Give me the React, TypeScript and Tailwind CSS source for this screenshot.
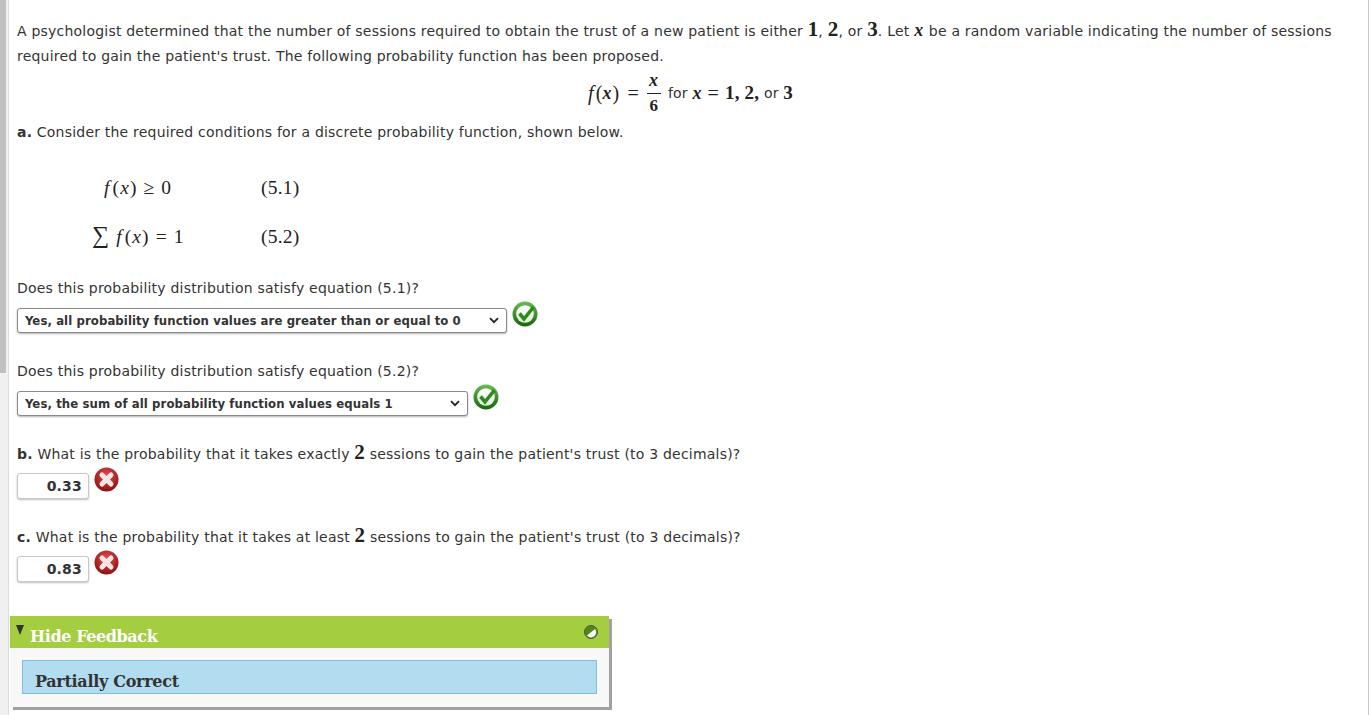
import React from "react";

const M = ({ children, className = "" }: { children: React.ReactNode; className?: string }) => (
  <span className={`font-['Liberation_Serif',serif] text-[#222] ${className}`}>{children}</span>
);
const X = () => <M className="italic font-bold text-[18px] tracking-[1px]">x</M>;
const Num = ({ n }: { n: string }) => <M className="font-bold text-[21px] leading-[1]">{n}</M>;

const Check = ({ className = "" }: { className?: string }) => (
  <svg width="26" height="26" viewBox="0 0 26 26" className={className}>
    <defs>
      <linearGradient id="ck" x1="0" y1="0" x2="0" y2="1">
        <stop offset="0" stopColor="#6dbb55" />
        <stop offset="1" stopColor="#176508" />
      </linearGradient>
      <linearGradient id="ci" x1="0" y1="0" x2="0" y2="1">
        <stop offset="0" stopColor="#ffffff" />
        <stop offset="1" stopColor="#dfeedd" />
      </linearGradient>
    </defs>
    <circle cx="13" cy="13" r="12.5" fill="url(#ck)" />
    <circle cx="13" cy="13" r="8.8" fill="url(#ci)" />
    <path d="M7.5 12.5 L12 18 L21.5 6" fill="none" stroke="#2f8a1c" strokeWidth="3.6" />
  </svg>
);

const Cross = () => (
  <svg width="25" height="25" viewBox="0 0 25 25">
    <defs>
      <radialGradient id="cr" cx="0.5" cy="0.35" r="0.65">
        <stop offset="0" stopColor="#e65050" />
        <stop offset="1" stopColor="#8c0f0f" />
      </radialGradient>
    </defs>
    <circle cx="12.5" cy="12.5" r="12" fill="url(#cr)" />
    <path d="M8 8 L17 17 M17 8 L8 17" stroke="#f3e6e6" strokeWidth="5" strokeLinecap="round" />
  </svg>
);

const Select = ({ text, width }: { text: string; width: string }) => (
  <div className={`${width} h-[25px] flex items-center justify-between bg-white border border-[#8a8a8a] rounded-[3px] shadow-[0_1px_2px_rgba(0,0,0,0.3)] pl-[7px] pr-[7px]`}>
    <span className="whitespace-nowrap text-[13px] font-bold text-[#333] font-['DejaVu_Sans_Condensed','DejaVu_Sans',sans-serif] tracking-[0.09px]">{text}</span>
    <svg width="10" height="7" viewBox="0 0 10 7"><path d="M1 1.2 L5 5.2 L9 1.2" fill="none" stroke="#222" strokeWidth="1.8" /></svg>
  </div>
);

const Answer = ({ value }: { value: string }) => (
  <div className="flex items-start">
    <div className="w-[72px] h-[26px] mt-[6px] flex items-center justify-end pr-[6px] bg-white border border-[#c8c8c8] rounded-[3px] shadow-[0_1px_2px_rgba(0,0,0,0.25)] text-[14px] font-bold text-[#333] tracking-[0.2px]">{value}</div>
    <div className="ml-[5px]"><Cross /></div>
  </div>
);

export default function App() {
  return (
    <div className="w-[1371px] h-[715px] overflow-hidden flex bg-white font-['DejaVu_Sans',sans-serif] text-[14px] text-[#333] tracking-[0.21px]">
      <div className="w-[6px] shrink-0 bg-[#f0f0f0]"><div className="h-[373px] bg-[#c0c0c0]" /></div>
      <div className="w-[3px] shrink-0 bg-[#f0f0f0] border-r border-[#dcdcdc]" />
      <div className="flex-1 min-w-0">
        <div className="pl-[8px] pr-[20px] pt-[18px]">
          <div className="leading-[25px] whitespace-nowrap h-[50px]">
            <div>A psychologist determined that the number of sessions required to obtain the trust of a new patient is either <Num n="1" />, <Num n="2" />, or <Num n="3" />. Let <X /> be a random variable indicating the number of sessions</div>
            <div>required to gain the patient's trust. The following probability function has been proposed.</div>
          </div>
          <div className="h-[50px] flex items-center justify-center pl-[16px]">
            <M className="text-[20px] italic pr-[2px]">f</M><M className="text-[20px]">(</M><X /><M className="text-[20px]">)</M>
            <M className="text-[20px] ml-[8px] mr-[8px]">=</M>
            <span className="inline-flex flex-col items-center mr-[7px] w-[14px]">
              <span className="h-[24px] leading-[22px]"><X /></span>
              <span className="w-full h-px bg-[#222]" />
              <M className="font-bold text-[17px] leading-[24px]">6</M>
            </span>
            <span>for&nbsp;</span><X /><M className="text-[20px] ml-[5px] mr-[6px]">=</M><M className="font-bold text-[19px]">1, 2,</M><span>&nbsp;or&nbsp;</span><M className="font-bold text-[19px]">3</M>
          </div>
          <div className="leading-[25px] mt-[2px]"><b>a.</b> Consider the required conditions for a discrete probability function, shown below.</div>

          <div className="mt-[31px] flex items-center h-[24px]">
            <M className="w-[244px] pl-[87px] text-[19.5px] tracking-[1.1px]"><i className="pr-[2px]">f</i>(<i>x</i>) ≥ 0</M>
            <M className="text-[19.5px]">(5.1)</M>
          </div>
          <div className="mt-[25px] flex items-center h-[24px]">
            <M className="w-[244px] pl-[75px] text-[19.5px] tracking-[1.1px]"><span className="text-[24px] leading-[1]">∑</span> <i className="pr-[2px]">f</i>(<i>x</i>) = 1</M>
            <M className="text-[19.5px]">(5.2)</M>
          </div>

          <div className="mt-[27px] leading-[25px]">Does this probability distribution satisfy equation (5.1)?</div>
          <div className="mt-[7px] flex items-start">
            <Select width="w-[490px]" text="Yes, all probability function values are greater than or equal to 0" />
            <Check className="ml-[5px] mt-[-7px]" />
          </div>
          <div className="mt-[26px] leading-[25px]">Does this probability distribution satisfy equation (5.2)?</div>
          <div className="mt-[7px] flex items-start">
            <Select width="w-[451px]" text="Yes, the sum of all probability function values equals 1" />
            <Check className="ml-[5px] mt-[-7px]" />
          </div>

          <div className="mt-[26px] leading-[25px]"><b>b.</b> What is the probability that it takes exactly <Num n="2" /> sessions to gain the patient's trust (to 3 decimals)?</div>
          <Answer value="0.33" />
          <div className="mt-[26px] leading-[25px]"><b>c.</b> What is the probability that it takes at least <Num n="2" /> sessions to gain the patient's trust (to 3 decimals)?</div>
          <Answer value="0.83" />
        </div>

        <div className="mt-[34px] ml-px w-[599px] h-[91px] bg-[#f8f8f8] shadow-[3px_3px_0_#a0a0a0] font-['DejaVu_Serif',serif]">
          <div className="h-[32px] bg-[#a4ce3f] flex items-center pl-[6px] pr-[11px] text-white font-bold text-[16px]">
            <span className="self-start mt-[9px] w-0 h-0 border-l-[4px] border-r-[4px] border-t-[10px] border-l-transparent border-r-transparent border-t-[#333]" />
            <span className="ml-[6px] flex-1 tracking-[-0.4px] mt-[9px]">Hide Feedback</span>
            <svg width="14" height="14" viewBox="0 0 14 14">
              <circle cx="7" cy="7" r="6.5" fill="#4f8a10" stroke="#555" />
              <path d="M3 10.5 L11 4 A5 5 0 0 1 3 10.5 Z" fill="#fff" />
            </svg>
          </div>
          <div className="ml-[12px] mr-[12px] mt-[12px] h-[34px] bg-[#b2dcef] border border-[#7fbfe0] pl-[12px] flex items-center text-[16px] font-bold text-[#333] tracking-[-0.3px]">
            <span className="mt-[9px]">Partially Correct</span>
          </div>
        </div>
      </div>
      <div className="w-[3px] shrink-0 border-l border-[#c8c8c8]" />
    </div>
  );
}
